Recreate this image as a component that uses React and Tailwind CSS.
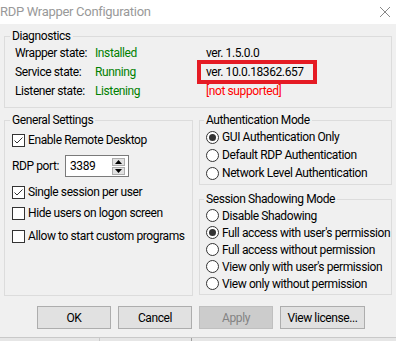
import React from 'react';

const font = { fontFamily: 'Roboto, "Liberation Sans", sans-serif' };

const Check = ({ checked, label }) => (
	<div className="flex items-center gap-[3px] whitespace-nowrap">
		<span className="flex h-[13px] w-[13px] shrink-0 items-center justify-center border border-[#333] bg-white">
			{checked && (
				<svg width="11" height="11" viewBox="0 0 11 11">
					<path d="M1.5 5.5 L4 8 L9.5 2.5" fill="none" stroke="#333" strokeWidth="1" />
				</svg>
			)}
		</span>
		<span>{label}</span>
	</div>
);

const Radio = ({ checked, label }) => (
	<div className="flex h-[17px] items-center gap-[3px] whitespace-nowrap">
		<span className="flex h-[13px] w-[13px] shrink-0 items-center justify-center rounded-full border border-[#333] bg-white">
			{checked && <span className="h-[7px] w-[7px] rounded-full bg-[#333]" />}
		</span>
		<span>{label}</span>
	</div>
);

const Group = ({ title, className, legendClass = 'ml-[5px]', children }) => (
	<fieldset className={`min-w-0 border border-[#dcdcdc] ${className}`}>
		<legend className={`h-[16px] whitespace-nowrap px-[2px] leading-[16px] text-[#000] ${legendClass}`}>{title}</legend>
		{children}
	</fieldset>
);

const Button = ({ children, disabled, className = 'w-[74px]' }) => (
	<button
		type="button"
		className={`h-[23px] whitespace-nowrap border ${className} ${
			disabled
				? 'border-[#bfbfbf] bg-[#cccccc] text-[#838383]'
				: 'border-[#adadad] bg-[#e1e1e1] text-[#000]'
		}`}>
		{children}
	</button>
);

export default function App() {
	return (
		<div className="relative flex h-[341px] w-[396px] flex-col overflow-hidden bg-[#f0f0f0] text-[12px] tracking-[-0.4px] text-[#000]" style={font}>
			<div className="flex h-[24px] shrink-0 items-center justify-between bg-white">
				<span className="text-[13px] tracking-[-0.3px] text-[#999]">RDP Wrapper Configuration</span>
				<svg width="12" height="12" viewBox="0 0 12 12" className="mr-[5px]">
					<path d="M1 1 L11 11 M11 1 L1 11" stroke="#888" strokeWidth="1" />
				</svg>
			</div>

			<div className="px-[4px]">
				<Group title="Diagnostics" className="mt-[4px] h-[80px]">
					<div className="grid grid-cols-[80px_111px_1fr] whitespace-nowrap pl-[10px]">
						<div className="h-[19px] leading-[19px]">Wrapper state:</div>
						<div className="h-[19px] leading-[19px] text-[#008000]">Installed</div>
						<div className="h-[19px] leading-[19px]">ver. 1.5.0.0</div>
						<div className="h-[19px] leading-[19px]">Service state:</div>
						<div className="h-[19px] leading-[19px] text-[#008000]">Running</div>
						<div className="relative h-[19px] leading-[19px]">
							ver. 10.0.18362.657
							<div className="absolute left-[-9px] top-[-3px] h-[24px] w-[120px] border-[4px] border-[#e51b24]" />
						</div>
						<div className="h-[19px] leading-[19px]">Listener state:</div>
						<div className="h-[19px] leading-[19px] text-[#008000]">Listening</div>
						<div className="h-[19px] leading-[19px] text-[#ff0000]">[not supported]</div>
					</div>
				</Group>

				<div className="mt-[4px] flex gap-[6px]">
					<Group title="General Settings" className="h-[184px] w-[189px] shrink-0">
						<div className="pl-[7px]">
							<div className="mt-[2px] flex h-[20px] items-center">
								<Check checked label="Enable Remote Desktop" />
							</div>
							<div className="mt-[5px] flex h-[22px] items-center whitespace-nowrap">
								<span className="w-[53px]">RDP port:</span>
								<div className="flex h-[22px] w-[64px] items-center justify-between border border-[#7a7a7a] bg-white pl-[4px] pr-[3px]">
									<span>3389</span>
									<div className="flex flex-col gap-[1px]">
										<span className="flex h-[8px] w-[13px] items-center justify-center border border-[#adadad] bg-[#e1e1e1]">
											<svg width="7" height="4" viewBox="0 0 7 4">
												<path d="M0 4 L3.5 0 L7 4 Z" fill="#000" />
											</svg>
										</span>
										<span className="flex h-[8px] w-[13px] items-center justify-center border border-[#adadad] bg-[#e1e1e1]">
											<svg width="7" height="4" viewBox="0 0 7 4">
												<path d="M0 0 L7 0 L3.5 4 Z" fill="#000" />
											</svg>
										</span>
									</div>
								</div>
							</div>
							<div className="mt-[5px] flex h-[20px] items-center">
								<Check checked label="Single session per user" />
							</div>
							<div className="mt-[1px] flex h-[20px] items-center">
								<Check label="Hide users on logon screen" />
							</div>
							<div className="mt-[3px] flex h-[20px] items-center">
								<Check label="Allow to start custom programs" />
							</div>
						</div>
					</Group>

					<div className="flex w-[193px] shrink-0 flex-col">
						<Group title="Authentication Mode" className="h-[73px]" legendClass="ml-[4px]">
							<div className="pl-[6px]">
								<div className="flex h-[18px] items-center"><Radio checked label="GUI Authentication Only" /></div>
								<div className="flex h-[18px] items-center"><Radio label="Default RDP Authentication" /></div>
								<div className="flex h-[18px] items-center"><Radio label="Network Level Authentication" /></div>
							</div>
						</Group>
						<Group title="Session Shadowing Mode" className="mt-[6px] h-[104px]" legendClass="ml-[4px]">
							<div className="pl-[6px]">
								<Radio label="Disable Shadowing" />
								<Radio checked label="Full access with user's permission" />
								<Radio label="Full access without permission" />
								<Radio label="View only with user's permission" />
								<Radio label="View only without permission" />
							</div>
						</Group>
					</div>
				</div>

				<div className="mt-[10px] flex gap-[7px] pl-[33px]">
					<Button>OK</Button>
					<Button>Cancel</Button>
					<Button disabled>Apply</Button>
					<Button className="w-[85px]">View license...</Button>
				</div>
			</div>

			<div className="mt-auto flex h-[4px] shrink-0 border-t border-[#c9c9c9] bg-[#e6e6e6]">
				<div className="w-[100px] border-r border-[#c9c9c9]" />
				<div className="w-[92px] border-r border-[#a0a0a0]" />
			</div>
		</div>
	);
}
